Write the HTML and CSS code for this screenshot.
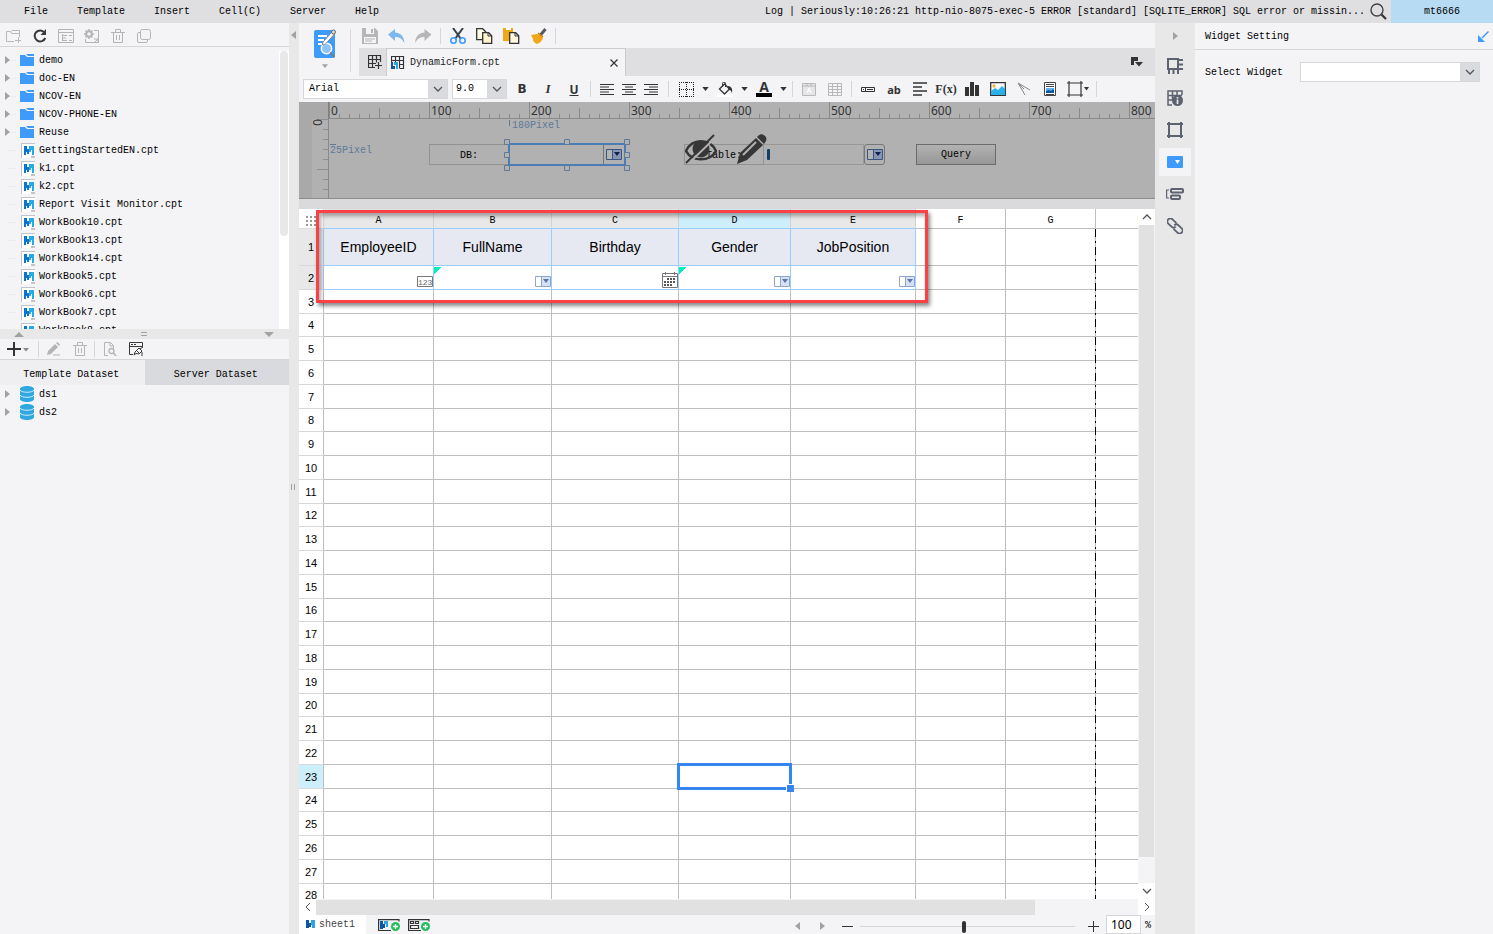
FILE: index.html
```html
<!DOCTYPE html>
<html lang="en">
<head>
<meta charset="utf-8">
<title>DynamicForm.cpt</title>
<link rel="stylesheet" href="styles.css">
</head>
<body>
<svg class="defs" aria-hidden="true">
  <symbol id="folder" viewBox="0 0 14 12"><path d="M0 1h5l2 2h7v9H0z" fill="#3f9bfb"/><path d="M6 0h8v2H8z" fill="#3f9bfb"/></symbol>
  <symbol id="cpt" viewBox="0 0 14 16"><g shape-rendering="crispEdges"><path d="M0 1h14v15H0z" fill="#fff"/><path d="M0 16V1h14v1H1v14zM10 14h4v2h-4z" fill="#c4c4c8"/><path d="M3 4h3v3h2v5H6v-2H5v3H3z" fill="#0b74cc"/><path d="M8 4h5v9h-2V8h-1v2H8z" fill="#25aae8"/></g></symbol>
  <symbol id="mini" viewBox="0 0 9 9"><g shape-rendering="crispEdges"><path d="M0 0h3v3h2v4H3v1H0z" fill="#0b57a4"/><path d="M5 0h4v8H6V5H5z" fill="#2ba3e4"/></g></symbol>
  <symbol id="db" viewBox="0 0 14 16"><path d="M0 3C0-1 14-1 14 3v10c0 4-14 4-14 0z" fill="#2fa7e1"/><path d="M0 4c1 3 13 3 14 0M0 9c1 3 13 3 14 0" stroke="#d5eefa" fill="none"/></symbol>
  <symbol id="right" viewBox="0 0 5 8"><path d="M0 0l5 4-5 4z" fill="#a2a2a2"/></symbol>
  <symbol id="left" viewBox="0 0 5 8"><path d="M5 0L0 4l5 4z" fill="#a2a2a2"/></symbol>
  <symbol id="down" viewBox="0 0 8 5"><path d="M0 0h8L4 5z" fill="currentColor"/></symbol>
  <symbol id="chev" viewBox="0 0 10 6"><path d="M1 1l4 4 4-4" fill="none" stroke="#555" stroke-width="1.3"/></symbol>
  <symbol id="trash" viewBox="0 0 14 14"><path d="M0 3.5h14M4.500 3V.5h5V3M2.500 4v9.500h9V4M5.500 6v5M8.500 6v5" fill="none" stroke="#b4b4b6"/></symbol>
  <symbol id="combo" viewBox="0 0 16 11"><path d="M.5.500h15v10H.5z" fill="#fff" stroke="#8fa6cc"/><path d="M6 1h9v9H6z" fill="#d3e0f6"/><path d="M6.500 1v9" stroke="#8fa6cc"/><path d="M8 3h6l-3 4z" fill="#5c74a8"/></symbol>
  <symbol id="combodark" viewBox="0 0 16 11"><path d="M.5.500h15v10H.5z" fill="#b4b4b4" stroke="#3c5480"/><path d="M6 1h9v9H6z" fill="#8496b4"/><path d="M6.500 1v9" stroke="#3c5480"/><path d="M8 3h6l-3 4z" fill="#10204c"/></symbol>
</svg>

<header class="menubar">
  <nav class="menus">
    <button>File</button><button>Template</button><button>Insert</button><button>Cell(C)</button><button>Server</button><button>Help</button>
  </nav>
  <p class="log">Log | Seriously:10:26:21 http-nio-8075-exec-5 ERROR [standard] [SQLITE_ERROR] SQL error or missin...</p>
  <button class="search" aria-label="Search"><svg width="17" height="17" viewBox="0 0 17 17"><circle cx="7" cy="7" r="6" fill="none" stroke="#444" stroke-width="1.400"/><path d="M11.500 11.500l4.500 4.500" stroke="#333" stroke-width="2.200"/></svg></button>
  <button class="user">mt6666</button>
</header>

<main class="workspace">
  <aside class="left">
    <div class="tools files-tools">
      <button aria-label="New folder"><svg width="16" height="14" viewBox="0 0 16 14"><path d="M8 12.500H.5v-10h4l1 2h8V8M5 2.500l1-1h7.500v3M12.500 8v6M9 11.500h6" fill="none" stroke="#b8b8ba"/></svg></button>
      <button aria-label="Refresh"><svg width="14" height="14" viewBox="0 0 14 14"><path d="M11.500 3.500A5.500 5.500 0 1 0 12.300 9" fill="none" stroke="#3a3a3c" stroke-width="2"/><path d="M13 0v6H7.500z" fill="#3a3a3c"/></svg></button>
      <button aria-label="Directory"><svg width="16" height="14" viewBox="0 0 16 14"><path d="M.5.500h15v13H.5zM.5 3.500h15M4.500 5v7M5 6.500h4M5 9h3M5 11.500h4M11 6.500h3M11 11.500h3" fill="none" stroke="#b4b4b6"/></svg></button>
      <button aria-label="Configure"><svg width="16" height="14" viewBox="0 0 16 14"><circle cx="5" cy="5" r="2.800" fill="none" stroke="#b4b4b6" stroke-width="2"/><path d="M5 0v2M5 8v2M0 5h2M8 5h2M1.500 1.500l1.300 1.300M7.200 7.200l1.300 1.300M8.500 1.500L7.200 2.800M1.500 8.500l1.300-1.300" stroke="#b4b4b6" stroke-width="1.500"/><path d="M10 1.500h4.500v12h-13V10M10 10h4v4M10 14l4-4" fill="none" stroke="#b4b4b6"/></svg></button>
      <button aria-label="Delete"><svg width="14" height="14"><use href="#trash"/></svg></button>
      <button aria-label="Copy"><svg width="14" height="14" viewBox="0 0 14 14"><rect x="3.500" y=".5" width="10" height="10" rx="2" fill="none" stroke="#b4b4b6"/><path d="M3 3.500H2a1.500 1.500 0 0 0-1.500 1.500v7A1.500 1.500 0 0 0 2 13.500h7a1.500 1.500 0 0 0 1.500-1.500v-1" fill="none" stroke="#b4b4b6"/></svg></button>
    </div>
    <div class="files">
      <ul class="tree lined">
        <li class="branch"><svg class="tw"><use href="#right"/></svg><svg class="ic"><use href="#folder"/></svg><a href="#demo">demo</a></li>
        <li class="branch"><svg class="tw"><use href="#right"/></svg><svg class="ic"><use href="#folder"/></svg><a href="#doc">doc-EN</a></li>
        <li class="branch"><svg class="tw"><use href="#right"/></svg><svg class="ic"><use href="#folder"/></svg><a href="#ncov">NCOV-EN</a></li>
        <li class="branch"><svg class="tw"><use href="#right"/></svg><svg class="ic"><use href="#folder"/></svg><a href="#phone">NCOV-PHONE-EN</a></li>
        <li class="branch"><svg class="tw"><use href="#right"/></svg><svg class="ic"><use href="#folder"/></svg><a href="#reuse">Reuse</a></li>
        <li><svg class="ic"><use href="#cpt"/></svg><a href="#f1">GettingStartedEN.cpt</a></li>
        <li><svg class="ic"><use href="#cpt"/></svg><a href="#f2">k1.cpt</a></li>
        <li><svg class="ic"><use href="#cpt"/></svg><a href="#f3">k2.cpt</a></li>
        <li><svg class="ic"><use href="#cpt"/></svg><a href="#f4">Report Visit Monitor.cpt</a></li>
        <li><svg class="ic"><use href="#cpt"/></svg><a href="#f5">WorkBook10.cpt</a></li>
        <li><svg class="ic"><use href="#cpt"/></svg><a href="#f6">WorkBook13.cpt</a></li>
        <li><svg class="ic"><use href="#cpt"/></svg><a href="#f7">WorkBook14.cpt</a></li>
        <li><svg class="ic"><use href="#cpt"/></svg><a href="#f8">WorkBook5.cpt</a></li>
        <li><svg class="ic"><use href="#cpt"/></svg><a href="#f9">WorkBook6.cpt</a></li>
        <li><svg class="ic"><use href="#cpt"/></svg><a href="#f10">WorkBook7.cpt</a></li>
        <li><svg class="ic"><use href="#cpt"/></svg><a href="#f11">WorkBook8.cpt</a></li>
      </ul>
      <div class="files-scroll"><div class="files-thumb"></div></div>
    </div>
    <div class="hsplit">
      <svg width="10" height="5" viewBox="0 0 10 5"><path d="M0 5h10L5 0z" fill="#a2a2a2"/></svg>
      <svg width="6" height="4" viewBox="0 0 6 4"><path d="M0 .5h6M0 3.500h6" stroke="#a2a2a2"/></svg>
      <svg width="10" height="5" viewBox="0 0 10 5"><path d="M0 0h10L5 5z" fill="#a2a2a2"/></svg>
    </div>
    <div class="tools data-tools">
      <button aria-label="Add"><svg width="22" height="14" viewBox="0 0 22 14"><path d="M0 7h14M7 0v14" stroke="#333" stroke-width="2"/><path d="M16 6h6l-3 3.500z" fill="#888"/></svg></button>
      <span class="sep"></span>
      <button aria-label="Edit"><svg width="14" height="14" viewBox="0 0 14 14"><path d="M0 13l1-4 7-7 3 3-7 7z" fill="#b4b4b6"/><path d="M9 1l1.500-1 2.500 2.500-1 1.500z" fill="#b4b4b6"/><path d="M6 13h7" stroke="#b4b4b6"/></svg></button>
      <button aria-label="Delete"><svg width="14" height="14"><use href="#trash"/></svg></button>
      <span class="sep"></span>
      <button aria-label="Preview"><svg width="14" height="14" viewBox="0 0 14 14"><path d="M5 13.500H1.500V.5h6l3 3V6M7 .5V4h4" fill="none" stroke="#b4b4b6"/><circle cx="8.500" cy="9" r="2.500" fill="none" stroke="#b4b4b6" stroke-width="1.300"/><path d="M10.500 11l2.500 3" stroke="#b4b4b6" stroke-width="1.500"/></svg></button>
      <button aria-label="Connections"><svg width="14" height="14" viewBox="0 0 14 14"><path d="M4 12.500H.5V.5h13V5M.5 4.500h13M2 2.500h2M5 2.500h2" fill="none" stroke="#3a3a3c"/><path d="M5 13l1-3 4-4 3 3-3 3-3-.5zM7 8l4 4M11 7l3-2M13 10v4" fill="none" stroke="#3a3a3c"/></svg></button>
    </div>
    <div class="dataset-tabs"><button class="on">Template Dataset</button><button>Server Dataset</button></div>
    <ul class="tree">
      <li class="branch"><svg class="tw"><use href="#right"/></svg><svg class="ic"><use href="#db"/></svg><a href="#ds1">ds1</a></li>
      <li class="branch"><svg class="tw"><use href="#right"/></svg><svg class="ic"><use href="#db"/></svg><a href="#ds2">ds2</a></li>
    </ul>
  </aside>

  <div class="vsplit">
    <svg width="5" height="8"><use href="#left"/></svg>
    <svg class="grip" width="4" height="6" viewBox="0 0 4 6"><path d="M.5 0v6M3.500 0v6" stroke="#a2a2a2"/></svg>
  </div>

  <section class="center">
    <div class="top">
      <button class="preview" aria-label="Preview">
        <svg width="24" height="30" viewBox="0 0 24 30"><rect x="1" y="2" width="21" height="28" rx="2" fill="#3f9bfb"/><path d="M5 8h9M5 12h6M5 16h4" stroke="#fff" stroke-width="2"/><circle cx="13.500" cy="20.500" r="5.200" fill="#8fc3fb" stroke="#fff" stroke-width="1.400"/><path d="M17 24.500l4.500 4.500" stroke="#6d7f96" stroke-width="1.800"/><path d="M10 14L19 4l2.500 2-9 10-3 1z" fill="#fff" stroke="#777" stroke-width=".8"/><circle cx="20.500" cy="4" r="2" fill="#ddd" stroke="#666"/></svg>
        <svg class="grey" width="6" height="4"><use href="#down"/></svg>
      </button>
      <span class="topsep"></span>
      <div class="topmain">
        <div class="quick">
          <button aria-label="Save"><svg width="16" height="16" viewBox="0 0 16 16"><path d="M0 0h13l3 3v13H0z" fill="#b6b6b8"/><path d="M4 0h8v6H4zM2 9h12v6H2z" fill="#f4f4f7"/><path d="M9 1h2v4H9z" fill="#b6b6b8"/><path d="M3 11h10M3 13h7" stroke="#b6b6b8"/></svg></button>
          <button aria-label="Undo"><svg width="17" height="16" viewBox="0 0 17 16"><path d="M0 6.500L7 1v3.500c6 .5 9 4 9.500 10.500C14 10.500 11 9 7 9v4z" fill="#7db7f0"/></svg></button>
          <button aria-label="Redo"><svg width="17" height="16" viewBox="0 0 17 16"><path d="M16.500 6.500l-7-5.500v3.500C3.500 5 .5 8.500 0 15c2.500-4.500 5.500-6 9.500-6v4z" fill="#b6b6b8"/></svg></button>
          <span class="sep"></span>
          <button aria-label="Cut"><svg width="16" height="16" viewBox="0 0 16 16"><path d="M3 0l8 11M13 0L5 11" stroke="#3a3f48" stroke-width="2"/><circle cx="3.500" cy="12.500" r="2.700" fill="none" stroke="#3f9bfb" stroke-width="1.600"/><circle cx="12.500" cy="12.500" r="2.700" fill="none" stroke="#3f9bfb" stroke-width="1.600"/></svg></button>
          <button aria-label="Copy"><svg width="17" height="16" viewBox="0 0 17 16"><path d="M.7.700h6l3 3v8h-9z" fill="#fffbe8" stroke="#333" stroke-width="1.300"/><path d="M6.700 4.700h6l3 3v7.600h-9z" fill="#fff3d0" stroke="#333" stroke-width="1.300"/><path d="M12 5v3h4" fill="none" stroke="#333"/></svg></button>
          <button aria-label="Paste"><svg width="17" height="16" viewBox="0 0 17 16"><path d="M0 0h10v13H0z" fill="#f0a818"/><path d="M3 0h5v2H3z" fill="#fff"/><path d="M6.700 4.700h6l3 3v7.600h-9z" fill="#fff7e0" stroke="#333" stroke-width="1.300"/><path d="M12 5v3h4" fill="none" stroke="#333"/></svg></button>
          <button aria-label="Format brush"><svg width="16" height="16" viewBox="0 0 16 16"><path d="M14.500 1L9.500 7" stroke="#555a66" stroke-width="3"/><path d="M0 7l6-1 4 1 2 3c-1 3-3 5-6 6-3-1-4-3-4-5z" fill="#f0a818"/><path d="M7 5l5 4" stroke="#c77f10" stroke-width="1.500"/></svg></button>
          <span class="sep"></span>
        </div>
        <div class="doctabs">
          <button class="addtab" aria-label="New sheet"><svg width="14" height="14" viewBox="0 0 14 14"><path d="M7 12.500H.5v-12h12V7M.5 4.500h12M.5 8.500H8M4.500.5v12M8.500.5v7M10.500 7v7M7 10.500h7" fill="none" stroke="#333" stroke-width="1.200"/></svg></button>
          <div class="doctab"><svg width="14" height="14" viewBox="0 0 14 14"><path d="M7 12.500H.5v-12h12v12H9M.5 4.500h12M.5 8.500h12M4.500.5v12M8.500.5v12" fill="none" stroke="#333" stroke-width="1.200"/><g shape-rendering="crispEdges"><path d="M0 6h8v8H0z" fill="#f4f4f7"/><path d="M0 6h2v4h2v3H0z" fill="#0b57a4"/><path d="M3 6h4v7H5V9H3z" fill="#2ba3e4"/></g></svg><span>DynamicForm.cpt</span><button aria-label="Close"><svg width="8" height="8" viewBox="0 0 8 8"><path d="M.5.500l7 7M7.500.500l-7 7" stroke="#333" stroke-width="1.200"/></svg></button></div>
          <button class="tablist" aria-label="Tab list"><svg width="12" height="10" viewBox="0 0 12 10"><path d="M0 0h7v4H3v4H0z" fill="#333"/><path d="M4 5h8l-4 4.500z" fill="#333"/></svg></button>
        </div>
      </div>
    </div>

    <div class="format">
      <div class="pick font"><select aria-label="Font"><option>Arial</option></select><span><svg width="10" height="6"><use href="#chev"/></svg></span></div>
      <div class="pick size"><select aria-label="Size"><option>9.0</option></select><span><svg width="10" height="6"><use href="#chev"/></svg></span></div>
      <div class="grp w26">
        <button class="b">B</button><button class="i">I</button><button class="u">U</button>
      </div>
      <span class="sep"></span>
      <div class="grp w22">
        <button aria-label="Align left"><svg width="14" height="11" viewBox="0 0 14 11"><path d="M0 .5h14M0 3h9M0 5.500h14M0 8h9M0 10.500h14" stroke="#333"/></svg></button>
        <button aria-label="Align center"><svg width="14" height="11" viewBox="0 0 14 11"><path d="M0 .5h14M3 3h8M0 5.500h14M3 8h8M0 10.500h14" stroke="#333"/></svg></button>
        <button aria-label="Align right"><svg width="14" height="11" viewBox="0 0 14 11"><path d="M0 .5h14M5 3h9M0 5.500h14M5 8h9M0 10.500h14" stroke="#333"/></svg></button>
      </div>
      <span class="sep"></span>
      <div class="grp w39">
        <button aria-label="Borders"><svg width="15" height="15" viewBox="0 0 15 15"><path d="M0 .5h15M0 14.500h15M0 7.500h15M.5 0v15M14.500 0v15M7.500 0v15" fill="none" stroke="#222" stroke-dasharray="1 1"/></svg><svg width="7" height="4"><use href="#down"/></svg></button>
        <button aria-label="Fill"><svg width="16" height="15" viewBox="0 0 16 15"><path d="M0 12h16v3H0z" fill="#fff"/><path d="M2.500 7l5-5 5 5-5 5z" fill="none" stroke="#333" stroke-width="1.300"/><path d="M5.500 5V1.500a1.500 1.500 0 0 1 3 0V5" fill="none" stroke="#333"/><path d="M11 4c3 0 5 3 4 7-1-2-1-3-4-4z" fill="#333"/></svg><svg width="7" height="4"><use href="#down"/></svg></button>
        <button aria-label="Text color"><span class="acolor">A</span><svg width="7" height="4"><use href="#down"/></svg></button>
      </div>
      <span class="sep"></span>
      <div class="grp w26">
        <button aria-label="Merge"><svg width="14" height="13" viewBox="0 0 14 13"><path d="M.5.500h13v12H.5zM.5 3h13M5 0v3M9 0v3" fill="#e6e6e8" stroke="#b8b8ba"/><path d="M5 10l2-5 2 5M6 8h2" fill="none" stroke="#fff"/></svg></button>
        <button aria-label="Split"><svg width="14" height="13" viewBox="0 0 14 13"><path d="M.5.500h13v12H.5zM.5 3.500h13M.5 6.500h13M.5 9.500h13M4.500.500v12M9.500.500v12" fill="none" stroke="#b8b8ba"/></svg></button>
      </div>
      <span class="sep"></span>
      <div class="grp w26">
        <button aria-label="Text"><svg width="14" height="5" viewBox="0 0 14 5"><path d="M.5.500h13v4H.5zM4.500 0v5M2 2.500h1M6 2.500h6" fill="none" stroke="#333"/></svg></button>
        <button class="ab">ab</button>
        <button aria-label="Rich text"><svg width="14" height="14" viewBox="0 0 14 14"><path d="M0 1h14M0 5h9M0 9h14M0 13h9" stroke="#333" stroke-width="1.600"/></svg></button>
        <button class="fx">F(x)</button>
        <button aria-label="Chart"><svg width="14" height="14" viewBox="0 0 14 14"><path d="M0 5h4v9H0zM5 0h4v14H5zM10 3h4v11h-4z" fill="#333"/></svg></button>
        <button aria-label="Image"><svg width="16" height="14" viewBox="0 0 16 14"><path d="M.7.700h14.600v12.600H.7z" fill="#fff" stroke="#333" stroke-width="1.300"/><path d="M1 9l4-3 3 2 4-4 3 3v6H1z" fill="#2ab0ea"/><circle cx="4" cy="4" r="1.700" fill="#f4b53c"/></svg></button>
        <button aria-label="Slope line"><svg width="14" height="14" viewBox="0 0 14 14"><path d="M8 13L1 1l12 7M1 1l6 6" fill="none" stroke="#888"/></svg></button>
        <button aria-label="Sub report"><svg width="12" height="14" viewBox="0 0 12 14"><path d="M.5.500h11v13H.5z" fill="#fff" stroke="#444"/><path d="M2 2.500h8M2 4.500h8M2 12.500h8" stroke="#444"/><path d="M2 6h8v5H2z" fill="#5fb2ee"/><path d="M2 9l3-1 2 1 2-2 1 1v3H2z" fill="#0d56a8"/></svg></button>
        <button class="wide" aria-label="Float"><svg width="22" height="16" viewBox="0 0 22 16"><path d="M2 0v16M14 0v16M0 2h16M0 14h16" stroke="#333" stroke-width="1.200"/><path d="M17 6h5l-2.500 3.500z" fill="#333"/></svg></button>
      </div>
      <span class="sep last"></span>
    </div>

    <div class="param">
      <div class="corner"></div>
      <div class="hruler"><span>0</span><span>100</span><span>200</span><span>300</span><span>400</span><span>500</span><span>600</span><span>700</span><span>800</span></div>
      <div class="vruler"><span>0</span></div>
      <div class="canvas">
        <span class="guide gx">180Pixel</span>
        <span class="guide gy">25Pixel</span>
        <label class="wlabel db" for="dbBox">DB:</label>
        <div class="wcombo dbbox"><input id="dbBox" type="text"><span><svg width="16" height="11"><use href="#combodark"/></svg></span></div>
        <svg class="handles" width="126" height="34" viewBox="0 0 126 34"><path d="M.5.500h5v5h-5zM60.500.500h5v5h-5zM120.500.500h5v5h-5zM.5 13.500h5v5h-5zM120.500 13.500h5v5h-5zM.5 26.500h5v5h-5zM60.500 26.500h5v5h-5zM120.500 26.500h5v5h-5z" fill="#b1b1b1" stroke="#5f7a99"/></svg>
        <label class="wlabel tb" for="tbBox">Table:</label>
        <div class="wcombo tbbox"><input id="tbBox" type="text"><span><svg width="16" height="11"><use href="#combodark"/></svg></span></div>
        <svg class="eye" width="32" height="30" viewBox="0 0 32 30"><path d="M1 17C7 4 25 4 31 17 25 28 7 28 1 17z" fill="none" stroke="#363636" stroke-width="2.500"/><circle cx="16" cy="15" r="8.500" fill="#363636"/><path d="M3 30L31 3" stroke="#b1b1b1" stroke-width="2"/><path d="M1 29L29 1" stroke="#363636" stroke-width="2"/></svg>
        <svg class="pen" width="30" height="30" viewBox="0 0 30 30"><path d="M0 30l3-11L19 4l7 7L10 26z" fill="#363636"/><path d="M6 21L19 8" stroke="#b1b1b1" stroke-width="2"/><path d="M21 2c4-4 10 0 8 5l-2 3-7-7z" fill="#363636"/></svg>
        <span class="caret"></span>
        <button class="query">Query</button>
      </div>
    </div>

    <div class="sheet-area">
      <div class="sheet">
        <table>
          <colgroup><col class="c0"><col class="cA"><col class="cB"><col class="cC"><col class="cD"><col class="cE"><col class="cF"><col class="cF"><col class="cF"></colgroup>
          <thead><tr><th><svg width="10" height="10" viewBox="0 0 10 10"><path d="M0 1h10M0 5h10M0 9h10" stroke="#999" stroke-width="2" stroke-dasharray="2 2"/></svg></th><th class="used">A</th><th class="used">B</th><th class="used">C</th><th class="cur">D</th><th class="used">E</th><th>F</th><th>G</th><th>H</th></tr></thead>
          <tbody>
            <tr class="r1"><th class="used">1</th><td>EmployeeID</td><td>FullName</td><td>Birthday</td><td>Gender</td><td>JobPosition</td><td></td><td></td><td></td></tr>
            <tr class="r2"><th class="used">2</th><td><svg width="16" height="11" viewBox="0 0 16 11"><path d="M.5.500h15v10H.5z" fill="#fff" stroke="#777"/><text x="1" y="9" class="num">123</text></svg></td><td class="mark"><svg width="16" height="11"><use href="#combo"/></svg></td><td class="cal"><svg width="16" height="16" viewBox="0 0 16 16"><path d="M.5 1.500h15v14H.5zM.5 4.500h15M3.500 0v3M12.500 0v3" fill="#fff" stroke="#777"/><path d="M5 7h8M2 10h11M2 13h8" stroke="#555" stroke-width="2" stroke-dasharray="2 1"/></svg></td><td class="mark"><svg width="16" height="11"><use href="#combo"/></svg></td><td><svg width="16" height="11"><use href="#combo"/></svg></td><td></td><td></td><td></td></tr>
            <tr><th>3</th><td></td><td></td><td></td><td></td><td></td><td></td><td></td><td></td></tr>
            <tr><th>4</th><td></td><td></td><td></td><td></td><td></td><td></td><td></td><td></td></tr>
            <tr><th>5</th><td></td><td></td><td></td><td></td><td></td><td></td><td></td><td></td></tr>
            <tr><th>6</th><td></td><td></td><td></td><td></td><td></td><td></td><td></td><td></td></tr>
            <tr><th>7</th><td></td><td></td><td></td><td></td><td></td><td></td><td></td><td></td></tr>
            <tr><th>8</th><td></td><td></td><td></td><td></td><td></td><td></td><td></td><td></td></tr>
            <tr><th>9</th><td></td><td></td><td></td><td></td><td></td><td></td><td></td><td></td></tr>
            <tr><th>10</th><td></td><td></td><td></td><td></td><td></td><td></td><td></td><td></td></tr>
            <tr><th>11</th><td></td><td></td><td></td><td></td><td></td><td></td><td></td><td></td></tr>
            <tr><th>12</th><td></td><td></td><td></td><td></td><td></td><td></td><td></td><td></td></tr>
            <tr><th>13</th><td></td><td></td><td></td><td></td><td></td><td></td><td></td><td></td></tr>
            <tr><th>14</th><td></td><td></td><td></td><td></td><td></td><td></td><td></td><td></td></tr>
            <tr><th>15</th><td></td><td></td><td></td><td></td><td></td><td></td><td></td><td></td></tr>
            <tr><th>16</th><td></td><td></td><td></td><td></td><td></td><td></td><td></td><td></td></tr>
            <tr><th>17</th><td></td><td></td><td></td><td></td><td></td><td></td><td></td><td></td></tr>
            <tr><th>18</th><td></td><td></td><td></td><td></td><td></td><td></td><td></td><td></td></tr>
            <tr><th>19</th><td></td><td></td><td></td><td></td><td></td><td></td><td></td><td></td></tr>
            <tr><th>20</th><td></td><td></td><td></td><td></td><td></td><td></td><td></td><td></td></tr>
            <tr><th>21</th><td></td><td></td><td></td><td></td><td></td><td></td><td></td><td></td></tr>
            <tr><th>22</th><td></td><td></td><td></td><td></td><td></td><td></td><td></td><td></td></tr>
            <tr><th class="cur">23</th><td></td><td></td><td></td><td class="selected"></td><td></td><td></td><td></td><td></td></tr>
            <tr><th>24</th><td></td><td></td><td></td><td></td><td></td><td></td><td></td><td></td></tr>
            <tr><th>25</th><td></td><td></td><td></td><td></td><td></td><td></td><td></td><td></td></tr>
            <tr><th>26</th><td></td><td></td><td></td><td></td><td></td><td></td><td></td><td></td></tr>
            <tr><th>27</th><td></td><td></td><td></td><td></td><td></td><td></td><td></td><td></td></tr>
            <tr><th>28</th><td></td><td></td><td></td><td></td><td></td><td></td><td></td><td></td></tr>
          </tbody>
        </table>
        <div class="pagebreak"></div>
      </div>
      <div class="vscroll">
        <button aria-label="Scroll up"><svg class="flip" width="10" height="6"><use href="#chev"/></svg></button>
        <div class="vtrack"><div class="vthumb"></div></div>
        <button aria-label="Scroll down"><svg width="10" height="6"><use href="#chev"/></svg></button>
      </div>
      <div class="redbox"></div>
    </div>
    <div class="hscroll">
      <button aria-label="Scroll left"><svg width="6" height="10" viewBox="0 0 6 10"><path d="M5 1L1 5l4 4" fill="none" stroke="#555"/></svg></button>
      <div class="htrack"><div class="hthumb"></div></div>
      <button aria-label="Scroll right"><svg width="6" height="10" viewBox="0 0 6 10"><path d="M1 1l4 4-4 4" fill="none" stroke="#555"/></svg></button>
    </div>
    <footer class="status">
      <button class="sheet1"><svg width="9" height="9"><use href="#mini"/></svg>sheet1</button>
      <button class="add" aria-label="Add report sheet"><svg width="22" height="12" viewBox="0 0 22 12"><path d="M13 11.500H.6V.6H21v2" fill="none" stroke="#333" stroke-width="1.200"/><g shape-rendering="crispEdges"><path d="M2 2h3v3h2v4H5v1H2z" fill="#0b57a4"/><path d="M6 2h4v6H8V5H6z" fill="#2ba3e4"/></g><circle cx="17.500" cy="7.500" r="4.500" fill="#21c05c"/><path d="M15 7.500h5M17.500 5v5" stroke="#fff" stroke-width="1.300"/></svg></button>
      <button class="add" aria-label="Add form sheet"><svg width="22" height="12" viewBox="0 0 22 12"><path d="M13 11.500H.6V.6H21v2M2.500 2.500h3v2h-3zM7.500 2.500h3v2h-3zM2.500 6.500h8v3h-8z" fill="none" stroke="#333" stroke-width="1.200"/><circle cx="17.500" cy="7.500" r="4.500" fill="#21c05c"/><path d="M15 7.500h5M17.500 5v5" stroke="#fff" stroke-width="1.300"/></svg></button>
      <span class="grow"></span>
      <button class="nav" aria-label="Previous sheet"><svg width="5" height="8"><use href="#left"/></svg></button>
      <button class="nav" aria-label="Next sheet"><svg width="5" height="8"><use href="#right"/></svg></button>
      <button class="nav" aria-label="Zoom out"><svg width="11" height="11" viewBox="0 0 11 11"><path d="M0 5.500h11" stroke="#333"/></svg></button>
      <input class="zoom" type="range" min="0" max="200" value="97" aria-label="Zoom">
      <button class="nav zin" aria-label="Zoom in"><svg width="11" height="11" viewBox="0 0 11 11"><path d="M0 5.500h11M5.500 0v11" stroke="#333"/></svg></button>
      <input class="pct" id="pct" type="text" value="100"><label for="pct">%</label>
    </footer>
  </section>

  <nav class="rail">
    <button class="fold" aria-label="Collapse"><svg width="5" height="8"><use href="#right"/></svg></button>
    <button aria-label="Cell element"><svg width="16" height="16" viewBox="0 0 16 16"><path d="M1 1h10v10H1zM11 2h5M11 6.500h5M11 11h5M2 11v5M6.500 11v5M11 11v5" fill="none" stroke="#5c6270" stroke-width="2"/></svg></button>
    <button aria-label="Cell attributes"><svg width="16" height="16" viewBox="0 0 16 16"><path d="M5 15H1V1h14v4M1 5.500h14M1 10h5M5.500 1v9M10 1v4" fill="none" stroke="#5c6270" stroke-width="1.500"/><circle cx="10.500" cy="10.500" r="5.500" fill="#5c6270"/><path d="M10.500 7v1.500M10.500 9.500V14" stroke="#e8e8e8" stroke-width="1.700"/></svg></button>
    <button aria-label="Float element"><svg width="16" height="16" viewBox="0 0 16 16"><path d="M2 2h12v12H2z" fill="none" stroke="#5c6270" stroke-width="2"/><path d="M0 1h3v2H0zM13 1h3v2h-3zM0 13h3v2H0zM13 13h3v2h-3zM1 0h2v3H1zM13 0h2v3h-2zM1 13h2v3H1zM13 13h2v3h-2z" fill="#5c6270"/></svg></button>
    <button class="on" aria-label="Widget setting"><svg width="16" height="12" viewBox="0 0 16 12"><rect width="16" height="12" rx="1" fill="#3f9bfb"/><path d="M8 4h5l-2.500 4z" fill="#fff"/></svg></button>
    <button aria-label="Conditions"><svg width="18" height="12" viewBox="0 0 18 12"><path d="M3 2H.6v8H3" fill="none" stroke="#5c6270" stroke-width="1.200"/><rect x="5" y="1" width="12" height="3.500" rx="1" fill="none" stroke="#5c6270" stroke-width="2"/><rect x="5" y="7.500" width="9" height="3.500" rx="1" fill="none" stroke="#5c6270" stroke-width="2"/></svg></button>
    <button aria-label="Hyperlink"><svg width="16" height="16" viewBox="0 0 16 16"><g fill="none" stroke="#5c6270" stroke-width="1.800" transform="rotate(45 8 8)"><path d="M7 5H1.500a3 3 0 0 0 0 6H6a3 3 0 0 0 3-3"/><path d="M9 11h5.500a3 3 0 0 0 0-6H10a3 3 0 0 0-3 3"/></g></svg></button>
  </nav>

  <aside class="right">
    <h2>Widget Setting <button aria-label="Detach"><svg width="11" height="11" viewBox="0 0 11 11"><path d="M10.500.500L4 7" stroke="#3f9bfb" stroke-width="1.500"/><path d="M0 11V4l7 7z" fill="#3f9bfb"/></svg></button></h2>
    <div class="field"><label for="widget">Select Widget</label><div class="pick wsel"><select id="widget"><option></option></select><span><svg width="10" height="6"><use href="#chev"/></svg></span></div></div>
  </aside>
</main>
</body>
</html>
```
FILE: styles.css
```css
* { box-sizing: border-box; }
html, body { height: 100%; }
body {
  margin: 0;
  display: flex;
  flex-direction: column;
  overflow: hidden;
  background: #f4f4f7;
  color: #000;
  font: 10px/18px "Liberation Mono", monospace;
}
button, input, select { font: inherit; color: inherit; margin: 0; padding: 0; border: 0; background: none; border-radius: 0; outline: 0; }
button { display: flex; align-items: center; justify-content: center; flex: none; white-space: nowrap; }
svg { display: block; flex: none; }
ul, p, h2 { margin: 0; padding: 0; list-style: none; font-weight: normal; font-size: 10px; }
a { color: inherit; text-decoration: none; }
.defs { position: absolute; width: 0; height: 0; }
.grey { color: #a2a2a2; }
.sep { width: 1px; height: 16px; background: #d6d6d9; flex: none; }

.menubar { display: flex; align-items: center; height: 23px; flex: none; background: #dfdfe1; }
.menus { display: flex; gap: 29px; padding-left: 24px; flex: 1; }
.search { width: 26px; height: 23px; }
.user { width: 102px; height: 23px; background: #b7dbf2; }

.workspace { display: flex; flex: 1; min-height: 0; }

.left { width: 289px; flex: none; display: flex; flex-direction: column; }
.tools { display: flex; align-items: center; flex: none; border-bottom: 1px solid #d6d6d9; }
.files-tools { height: 24px; padding: 2px 0 0 1px; }
.files-tools button { width: 26px; }
.data-tools { height: 21px; padding-left: 7px; }
.data-tools button { width: 26px; }
.data-tools .sep { margin: 0 2px; }
.data-tools button + button { width: 25px; }
.data-tools button:first-child { width: 29px; justify-content: flex-start; }
.files { display: flex; height: 282px; padding-top: 4px; flex: none; overflow: hidden; }
.files .tree { flex: 1; }
.files-scroll { width: 10px; padding: 0 1px; background: #fff; }
.files-thumb { height: 185px; border-radius: 4px; background: #e8e8e8; }
.tree li { display: flex; align-items: center; height: 18px; padding-left: 21px; gap: 4px; }
.tree a { padding-top: 2px; }
.tree li.branch { padding-left: 5px; gap: 5px; }
.tree .tw { width: 5px; height: 8px; margin-right: 5px; }
.tree .ic { width: 14px; height: 16px; }
.lined li { background: linear-gradient(#ececef, #ececef) 8px 9px / 8px 1px no-repeat; }
.hsplit { height: 10px; flex: none; display: flex; align-items: center; justify-content: space-between; padding: 0 15px 0 14px; background: #e8e8e8; }
.dataset-tabs { display: flex; height: 25px; flex: none; }
.dataset-tabs button { flex: 1; padding: 5px 2px 0 0; background: #d9dade; }
.dataset-tabs .on { background: #efeff2; }

.vsplit { width: 10px; flex: none; background: #e8e8e8; display: flex; flex-direction: column; padding: 8px 0 0 2px; }
.grip { margin: auto 0; }

.center { flex: 1; min-width: 0; display: flex; flex-direction: column; }
.top { display: flex; flex: none; height: 53px; }
.preview { width: 51px; flex-direction: column; gap: 6px; padding-bottom: 4px; }
.topsep { width: 1px; margin: 6px 8px 4px 0; background: #dadadd; }
.topmain { flex: 1; display: flex; flex-direction: column; }
.quick { display: flex; align-items: center; height: 25px; margin-left: -3px; }
.quick button { width: 27px; height: 24px; }
.quick .sep { margin: 0 3px; }
.doctabs { display: flex; align-items: stretch; height: 28px; background: #dfdfe1; }
.addtab { width: 27px; padding-left: 5px; }
.doctab { display: flex; align-items: center; width: 240px; padding: 0 6px 0 4px; gap: 5px; background: #f4f4f7; border: 1px solid #cbcbce; border-bottom: 0; }
.doctab span { flex: 1; color: #222; }
.doctab button { width: 10px; }
.tablist { margin-left: auto; width: 36px; }

.format { display: flex; align-items: center; height: 26px; flex: none; padding-left: 4px; }
.pick { display: flex; height: 20px; flex: none; background: #fff; border: 1px solid #d6d7db; }
.pick select { flex: 1; min-width: 0; padding-left: 5px; appearance: none; }
.pick > span { width: 19px; display: flex; align-items: center; justify-content: center; background: #dadbdf; }
.font { width: 145px; margin-right: 4px; }
.size { width: 55px; }
.size select { padding-left: 3px; }
.grp { display: flex; }
.grp button { height: 24px; color: #333; }
.w26 button { width: 26px; }
.w22 button { width: 22px; }
.w22 { padding: 0 6px 0 5px; }
.w39 { padding: 0 1px 0 5px; }
.w39 button { width: 39px; gap: 8px; }
.w26 { padding: 0 3px 0 2px; }
.sep + .w26 { padding: 0 3px; }
.grp .wide { width: 30px; }
.acolor { width: 16px; height: 16px; border-bottom: 4px solid #000; font: bold 14px/11px "Open Sans", sans-serif; }
.grp .b { font: bold 12px "DejaVu Sans", sans-serif; }
.grp .i { font: italic bold 13px "Liberation Serif", serif; }
.grp .u { font: bold 12px "Open Sans", sans-serif; text-decoration: underline; }
.grp .ab { font: bold 11px "Open Sans", sans-serif; }
.grp .fx { font: bold 12px "Liberation Serif", serif; }

.param { display: grid; grid-template: 17px 79px / 30px 1fr; flex: none; overflow: hidden; background: #b1b1b1; color: #333; border-bottom: 1px solid #8c8c8c; height: 97px; }
.corner { background: #a9a9a9; border-right: 1px solid #7d7d7d; }
.hruler {
  display: flex; overflow: hidden; min-width: 0; border-bottom: 1px solid #8a8a8a;
  font: 12px/17px "Noto Sans", sans-serif;
  background:
    repeating-linear-gradient(90deg, #8a8a8a 0 1px, transparent 1px 100px) 0 0 / 100% 16px no-repeat,
    repeating-linear-gradient(90deg, #8a8a8a 0 1px, transparent 1px 50px) 0 6px / 100% 10px no-repeat,
    repeating-linear-gradient(90deg, #8a8a8a 0 1px, transparent 1px 10px) 0 12px / 100% 4px no-repeat,
    #b1b1b1;
}
.hruler span { width: 100px; flex: none; padding-left: 2px; }
.hruler span:last-child { width: auto; }
.vruler {
  border-right: 1px solid #8a8a8a; padding-left: 12px;
  font: 12px/12px "Noto Sans", sans-serif;
  background:
    repeating-linear-gradient(#8f8f8f 0 1px, transparent 1px 50px) 18px 0 / 11px 100% no-repeat,
    repeating-linear-gradient(#8f8f8f 0 1px, transparent 1px 10px) 24px 0 / 5px 100% no-repeat,
    linear-gradient(90deg, #a9a9a9 13px, #b1b1b1 13px);
}
.vruler span { display: block; width: 12px; writing-mode: vertical-rl; line-height: 12px; }
.canvas { position: relative; min-width: 0; overflow: hidden; line-height: 21px; color: #000; }
.canvas > * { position: absolute; }
.guide { color: #5f7a99; line-height: 12px; }
.gx { left: 180px; top: 1px; padding-left: 2px; border-left: 1px solid #5f7a99; height: 6px; }
.gy { left: 0; top: 25px; padding: 0 1px; }
.gy::before { content: ""; display: block; width: 6px; border-top: 1px solid #5f7a99; }
.wlabel { top: 25px; width: 80px; height: 21px; border: 1px solid #929292; text-align: center; }
.db { left: 100px; }
.tb { left: 355px; }
.wcombo { top: 25px; height: 21px; display: flex; }
.wcombo input { flex: 1; min-width: 0; border: 1px solid #989898; border-left: 0; }
.wcombo span { width: 21px; display: flex; align-items: center; justify-content: center; border: 1px solid #777; border-radius: 3px; }
.dbbox { left: 179px; width: 118px; top: 24px; height: 23px; border: 2px solid #4c7cb6; }
.dbbox input { border: 0; }
.dbbox span { border-width: 0 0 0 1px; border-radius: 0; }
.tbbox { left: 435px; width: 121px; }
.handles { left: 175px; top: 20px; }
.eye { left: 356px; top: 15px; }
.pen { left: 408px; top: 15px; }
.caret { left: 438px; top: 30px; width: 3px; height: 11px; background: #123f66; border-radius: 1px; }
.query { left: 587px; top: 25px; width: 80px; height: 21px; border: 1px solid #6c6c6c; background: linear-gradient(#b2b2b2, #979797); }

.sheet-area { position: relative; flex: 1; min-height: 0; display: flex; padding-top: 10px; background: #dadadc; }
.sheet { position: relative; flex: 1; min-width: 0; overflow: hidden; background: #fff; }
table { table-layout: fixed; width: 887px; border-collapse: separate; border-spacing: 0; }
.c0 { width: 25px; } .cA { width: 110px; } .cB { width: 118px; } .cC { width: 127px; } .cD { width: 112px; } .cE { width: 125px; } .cF { width: 90px; }
th, td { padding: 0; height: 24px; border: solid #bfbfbf; border-width: 0 1px 1px 0; line-height: 12px; text-align: center; vertical-align: middle; }
th { font-weight: normal; border-bottom-color: #d9d9dc; }
tbody th { font: 11px/12px "Liberation Sans", sans-serif; }
tbody tr:nth-child(4n) > * { height: 23px; }
thead th { height: 20px; padding-top: 4px; border-bottom-color: #bfbfbf; }
thead th:first-child { border-color: #ddd; }
thead th svg { margin: 0 auto; }
.used { background: #e8e8e8; }
thead .used, thead .cur { border-bottom-color: #99ccff; border-right-color: #d2d2d5; }
.cur { background: #cdeefb; }
tbody .r1 > * { height: 37px; }
.r1 td { font: 14px/16px "Liberation Sans", sans-serif; }
.r1 td:nth-child(-n+6) { background: #e6e9f2; }
.r1 td:nth-child(-n+6), .r2 td:nth-child(-n+6), .r1 th, .r2 th { border-right-color: #99ccff; }
.r1 td:nth-child(-n+6), .r2 td:nth-child(-n+6) { border-bottom-color: #99ccff; }
.r2 td { padding-top: 7px; }
.r2 td svg { margin-left: auto; }
.r2 .cal { padding-top: 5px; }
.num { font: 8px "Liberation Mono", monospace; fill: #666; }
.mark { background: linear-gradient(135deg, #00f0c0 5px, transparent 5px) 0 1px no-repeat; }
.selected { position: relative; }
.selected::before { content: ""; position: absolute; inset: -2px; border: 3px solid #3585f3; }
.selected::after { content: ""; position: absolute; right: -4px; bottom: -4px; width: 7px; height: 7px; border: 1px solid #fff; border-width: 1px 0 0 1px; background: #3585f3; }
.pagebreak { position: absolute; left: 796px; top: 20px; bottom: 0; width: 1px; background: repeating-linear-gradient(#000 0 8px, #bfbfbf 8px 12px, #000 12px 14px, #bfbfbf 14px 18px); }
.redbox { position: absolute; left: 17px; top: 11px; width: 612px; height: 93px; border: 3px solid #fb4145; box-shadow: 2px 3px 4px #0007, inset 2px 3px 4px #0005; }

.vscroll { width: 17px; display: flex; flex-direction: column; background: #f4f4f7; }
.vscroll button { height: 16px; background: #fff; }
.flip { transform: rotate(180deg); }
.vtrack { flex: 1; padding: 0 1px; }
.vthumb { height: 96%; background: #e1e1e1; }
.hscroll { display: flex; height: 16px; flex: none; background: #f4f4f7; }
.hscroll button { width: 17px; background: #fff; }
.htrack { flex: 1; padding-top: 1px; }
.hthumb { width: 87.500%; height: 15px; background: #e1e1e1; }

.status { display: flex; align-items: center; height: 19px; flex: none; }
.sheet1 { width: 67px; height: 19px; gap: 4px; padding-right: 4px; background: #fff; color: #444; }
.sheet1 + .add { margin-left: 8px; }
.add { width: 30px; }
.grow { flex: 1; }
.nav { width: 25px; height: 19px; padding-top: 3px; }
.zoom { width: 215px; height: 19px; padding-top: 4px; appearance: none; background: linear-gradient(#d6d6d9, #d6d6d9) 0 11px / 100% 1px no-repeat; }
.zoom::-webkit-slider-thumb { appearance: none; width: 4px; height: 12px; border-radius: 2px; background: #333; }
.zin { margin-left: 6px; }
.pct { width: 35px; height: 19px; padding-left: 4px; background: #fff; border: 1px solid #d6d6d9; font: 12px "Noto Sans", sans-serif; }
.status label { width: 14px; padding: 2px 0 0 4px; }

.rail { width: 40px; flex: none; display: flex; flex-direction: column; align-items: center; gap: 4px; background: #e8e8e8; }
.rail button { width: 32px; height: 28px; }
.rail .fold { height: 25px; }
.rail .on { background: #f4f4f7; }

.right { width: 298px; flex: none; }
.right h2 { display: flex; align-items: center; justify-content: space-between; height: 27px; padding: 1px 1px 0 10px; border-bottom: 1px solid #d6d6d9; }
.right h2 button { width: 18px; }
.field { display: flex; align-items: center; justify-content: space-between; padding: 12px 13px 0 10px; }
.field label { padding-top: 2px; }
.wsel { width: 180px; }
```
